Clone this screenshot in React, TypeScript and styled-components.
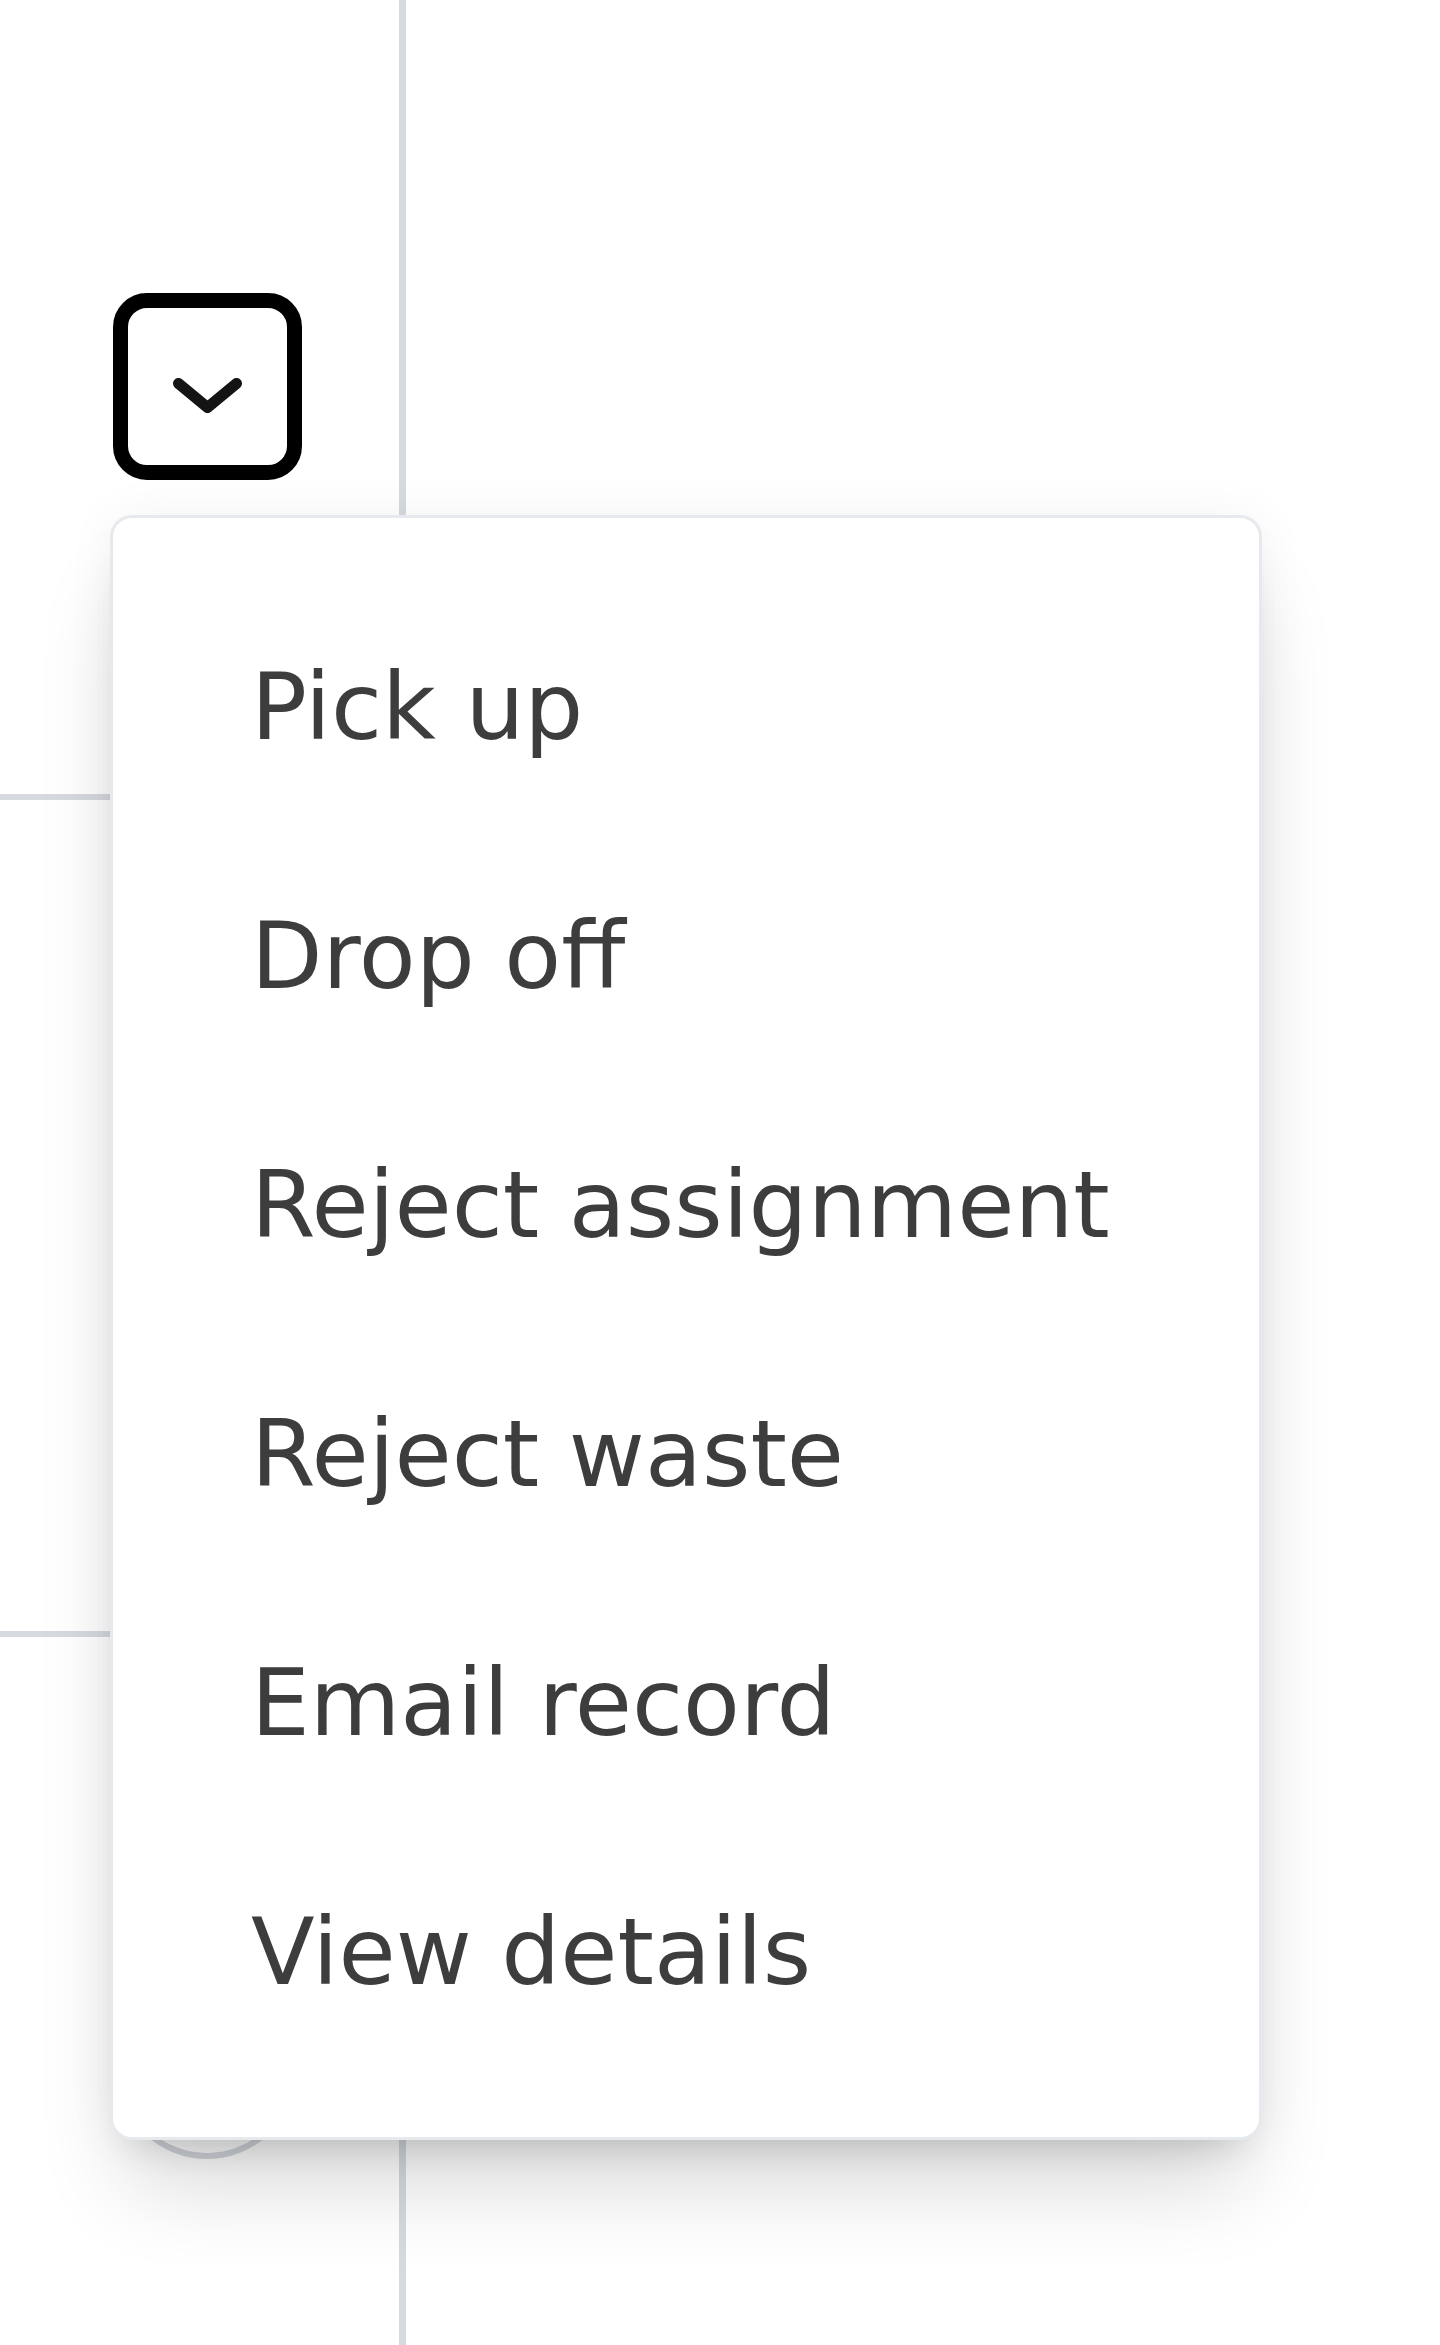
import React from "react";
import styled, { createGlobalStyle } from "styled-components";

const GlobalStyle = createGlobalStyle`
  html, body {
    margin: 0;
    padding: 0;
    background: #ffffff;
    overflow: hidden;
  }
  body {
    font-family: "DejaVu Sans", "Liberation Sans", sans-serif;
  }
  #root {
    min-height: 2345px;
  }
`;

const Page = styled.div`
  width: 1440px;
  height: 2345px;
  background: #ffffff;
  overflow: hidden;
`;

const Table = styled.div`
  width: 406px;
  margin-top: -37px;
  display: flex;
  flex-direction: column;
  border-right: 7px solid #d6dae0;
  box-sizing: border-box;
`;

const Row = styled.div<{ $shift: number; $last?: boolean }>`
  position: relative;
  height: 837px;
  box-sizing: border-box;
  border-bottom: ${(p) => (p.$last ? "none" : "6px solid #d6dae0")};
  display: flex;
  align-items: center;
  padding-left: ${(p) => (p.$last ? 117 : 113)}px;
  padding-top: ${(p) => p.$shift}px;
`;

const ActionWrap = styled.div`
  position: relative;
`;

const ToggleButton = styled.button`
  width: 189px;
  height: 187px;
  box-sizing: border-box;
  border: 15px solid #000000;
  border-radius: 34px;
  background: #ffffff;
  padding: 0;
  display: flex;
  align-items: center;
  justify-content: center;
  cursor: pointer;

  svg {
    margin-top: 18px;
  }
`;

const Ring = styled.div`
  width: 180px;
  height: 180px;
  box-sizing: border-box;
  border-radius: 50%;
  border: 6px solid #d3d7dd;
`;

const Menu = styled.div`
  position: absolute;
  top: calc(100% + 35px);
  left: -3px;
  width: 1152px;
  box-sizing: border-box;
  background: #ffffff;
  border: 3px solid #e6e9ed;
  border-radius: 22px;
  padding: 65px 0 60px;
  display: flex;
  flex-direction: column;
  z-index: 10;
  box-shadow: 0 60px 90px -18px rgba(0, 0, 0, 0.16),
    0 24px 36px -24px rgba(0, 0, 0, 0.16),
    0 0 50px rgba(0, 0, 0, 0.05);
`;

const MenuItem = styled.div`
  height: 249px;
  line-height: 249px;
  padding-left: 138px;
  font-family: "DejaVu Sans", "Liberation Sans", sans-serif;
  font-size: 93px;
  font-weight: 400;
  color: #3d3d3d;
  white-space: nowrap;
  cursor: pointer;
`;

const Chevron = () => (
  <svg width="69" height="35" viewBox="0 0 69 35" fill="none">
    <polyline
      points="5.5,5.5 34.5,29.5 63.5,5.5"
      stroke="#141414"
      strokeWidth="11"
      strokeLinecap="round"
      strokeLinejoin="round"
    />
  </svg>
);

const items = [
  "Pick up",
  "Drop off",
  "Reject assignment",
  "Reject waste",
  "Email record",
  "View details",
];

export default function App() {
  return (
    <Page>
      <GlobalStyle />
      <Table>
        <Row $shift={16}>
          <ActionWrap>
            <ToggleButton aria-label="Actions">
              <Chevron />
            </ToggleButton>
            <Menu>
              {items.map((label) => (
                <MenuItem key={label}>{label}</MenuItem>
              ))}
            </Menu>
          </ActionWrap>
        </Row>
        <Row $shift={16}>
          <ToggleButton aria-label="Actions">
            <Chevron />
          </ToggleButton>
        </Row>
        <Row $shift={26} $last>
          <Ring />
        </Row>
      </Table>
    </Page>
  );
}
